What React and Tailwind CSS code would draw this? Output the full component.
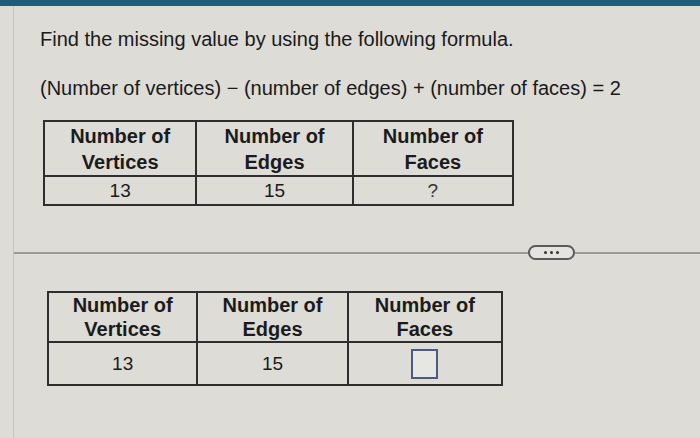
import React from "react";

function Table({ widths, headH, rowH, last, lh }) {
  const heads = [
    ["Number of", "Vertices"],
    ["Number of", "Edges"],
    ["Number of", "Faces"],
  ];
  const vals = ["13", "15", last];
  return (
    <table className="border-collapse border-2 border-[#2e2e2e] text-[#1b1b1b]" style={{ width: widths.reduce((a, b) => a + b, 0) }}>
      <tbody>
        <tr style={{ height: headH }}>
          {heads.map((h, i) => (
            <td key={i} style={{ width: widths[i], lineHeight: lh }} className="border-2 border-[#2e2e2e] text-center align-middle font-bold text-[20px] p-0">
              {h[0]}
              <br />
              {h[1]}
            </td>
          ))}
        </tr>
        <tr style={{ height: rowH }}>
          {vals.map((v, i) => (
            <td key={i} className="border-2 border-[#2e2e2e] text-center align-middle text-[19px] leading-[22px] p-0">
              {v}
            </td>
          ))}
        </tr>
      </tbody>
    </table>
  );
}

export default function App() {
  return (
    <div className="w-[700px] h-[438px] overflow-hidden bg-[#dddcd7] flex flex-col" style={{ fontFamily: '"Liberation Sans", Arial, sans-serif' }}>
      <div className="h-[6px] bg-[#1f5b7a] shrink-0" />
      <div className="flex-1 ml-[13px] border-l border-[#c4c4c0] flex flex-col">
        <div className="pl-[26px] pt-[21px] text-[20px] leading-[24px] text-[#1a1a1a]">
          Find the missing value by using the following formula.
        </div>
        <div className="pl-[26px] mt-[25px] text-[20px] leading-[24px] text-[#1a1a1a] whitespace-nowrap">
          (Number of vertices) − (number of edges) + (number of faces) = 2
        </div>
        <div className="pl-[29px] mt-[20px]">
          <Table widths={[153, 157, 161]} headH={55} rowH={29} lh="26px" last={<span className="text-[#333]">?</span>} />
        </div>
        <div className="mt-[39px] flex items-center">
          <div className="h-[2px] flex-1 bg-[#9a9a97]" />
          <div className="w-[47px] h-[15px] rounded-full border-2 border-[#5a5a5a] bg-[#e4e3df] flex items-center justify-center gap-[3px]">
            <span className="w-[3px] h-[3px] rounded-full bg-[#333]" />
            <span className="w-[3px] h-[3px] rounded-full bg-[#333]" />
            <span className="w-[3px] h-[3px] rounded-full bg-[#333]" />
          </div>
          <div className="h-[2px] w-[125px] bg-[#9a9a97]" />
        </div>
        <div className="pl-[33px] mt-[31px]">
          <Table
            widths={[150, 151, 155]}
            headH={50}
            rowH={43}
            lh="24px"
            last={<span className="inline-block align-middle w-[27px] h-[30px] border-2 border-[#4c5a85] bg-[#e6e6e2]" />}
          />
        </div>
      </div>
    </div>
  );
}
